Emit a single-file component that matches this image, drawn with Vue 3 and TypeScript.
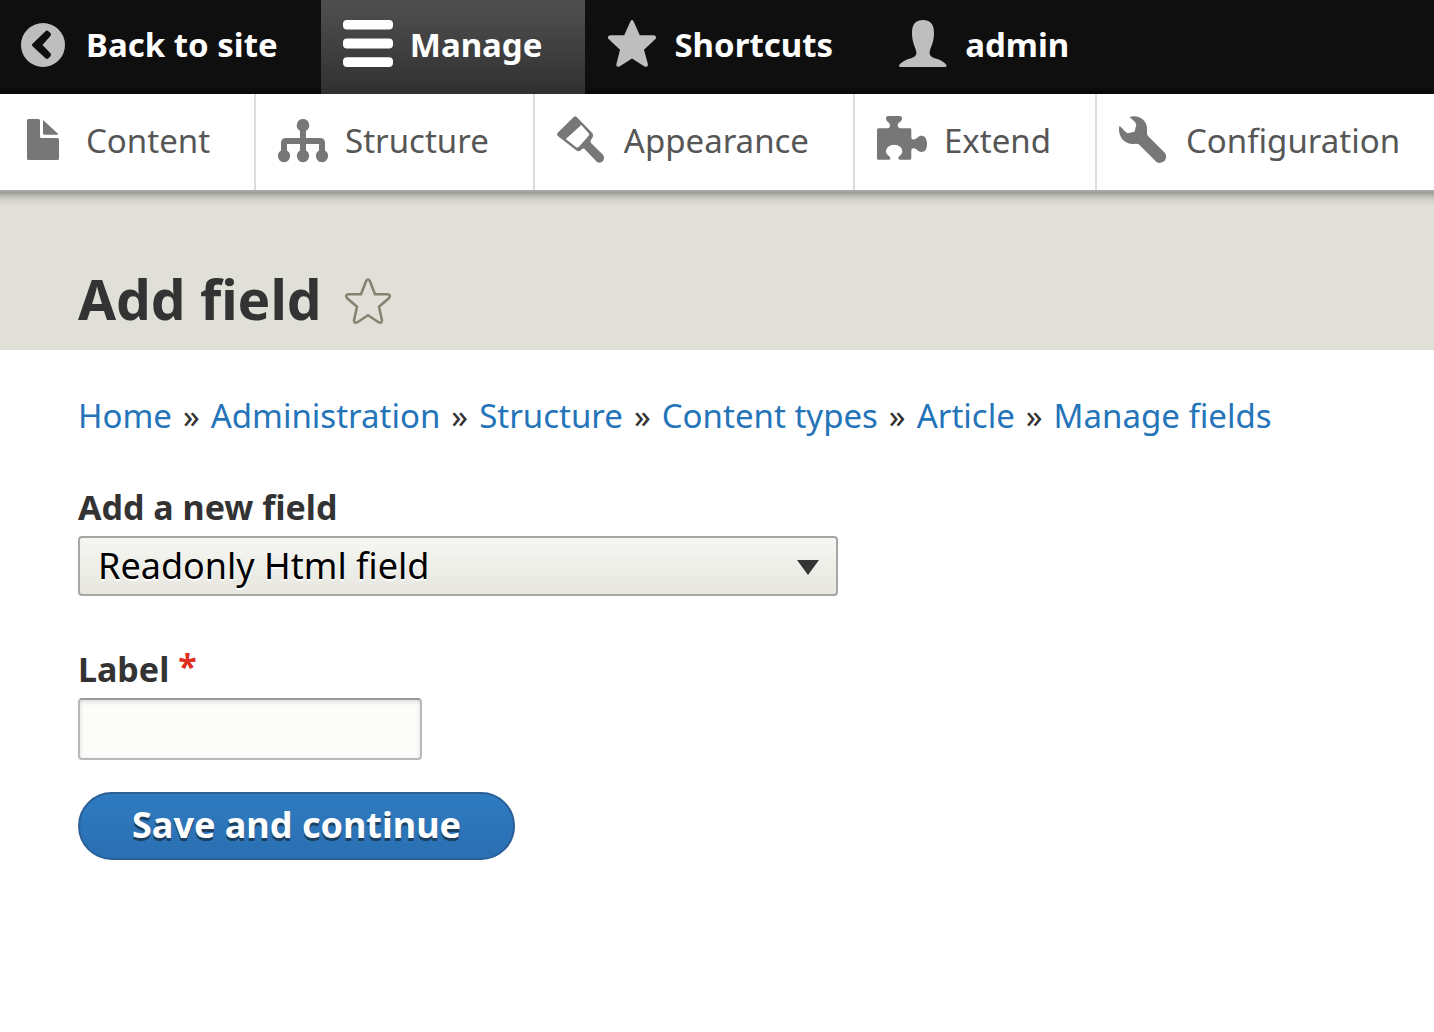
<script setup lang="ts">
import { ref } from 'vue'

interface ToolbarItem {
  id: string
  label: string
  active?: boolean
}

const barItems: ToolbarItem[] = [
  { id: 'back', label: 'Back to site' },
  { id: 'manage', label: 'Manage', active: true },
  { id: 'shortcuts', label: 'Shortcuts' },
  { id: 'user', label: 'admin' },
]

const trayItems: ToolbarItem[] = [
  { id: 'content', label: 'Content' },
  { id: 'structure', label: 'Structure' },
  { id: 'appearance', label: 'Appearance' },
  { id: 'extend', label: 'Extend' },
  { id: 'configuration', label: 'Configuration' },
]

const icons: Record<string, string> = {
  back: 'M21 3a22 22 0 1 0 0 44a22 22 0 1 0 0-44zM23.5 11.2q1.5-1.400 3 0l1.900 1.700q1.400 1.500 0 3L20.500 25l7.900 8.200q1.400 1.500 0 3l-1.900 2q-1.500 1.400-3 0L10.300 26q-1-1 0-2z',
  manage: 'M4 0h42a4 4 0 0 1 4 4v1.500a4 4 0 0 1-4 4H4a4 4 0 0 1-4-4V4a4 4 0 0 1 4-4zM4 18.500h42a4 4 0 0 1 4 4v2a4 4 0 0 1-4 4H4a4 4 0 0 1-4-4v-2a4 4 0 0 1 4-4zM4 37.300h42a4 4 0 0 1 4 4v1.700a4 4 0 0 1-4 4H4a4 4 0 0 1-4-4v-1.700a4 4 0 0 1 4-4z',
  shortcuts: 'M23.500 1.200Q25-1 26.500 1.200L32.800 15.300H46.500Q50 15.800 48.700 18.700L37 29.700L41 44.500Q41 47.800 37.500 46.500L25 38.500L12.500 46.500Q9 47.800 9.300 44.500L13 29.700L1.300 18.700Q0 15.800 3.500 15.300H17.200z',
  user: 'M25 0C33 0 36 5 36 13C36 22 33 26 31.600 32C31 38 38 38 42 40Q48.600 43.500 48.600 46Q48.600 47 47 47H2.600Q1 47 1 46Q1 43.500 8 40C12 38 19 38 18.400 32C17 26 14 22 14 13C14 5 17 0 25 0z',
  content: 'M6.500 3H16.500Q18 3 18 4.500V20.500Q18 22 19.500 22H35.500Q37 22 37 23.500V42.500Q37 44 35.500 44H6.500Q5 44 5 42.500V4.500Q5 3 6.500 3zM21 4L36 17.700Q36.500 18.800 35 18.800H22.500Q21 18.800 21 17.300z',
  structure: 'M25 3a6.300 6.300 0 0 1 3 11.800V22H42Q47 22 47 27V34.600A6.200 6.200 0 1 1 41 34.600V28H28V34.600A6.200 6.200 0 1 1 22 34.600V28H9V34.600A6.200 6.200 0 1 1 3 34.600V27Q3 22 8 22H22V14.800A6.300 6.300 0 0 1 25 3z',
  appearance: 'M17 .700Q18.300-.500 19.700 1L34.500 16.200Q37.200 18.500 35.500 21.500Q32.500 25.500 34 27L45.700 38.500Q48 41 46.300 44.500Q43.500 48 40 46L28.500 34Q26.500 31.300 24.500 33.500Q22 36.500 19.500 34.500L.800 20Q-.800 18.800 .500 17zM8.800 23L19.500 31.500Q21.500 32 23.500 29L31 20.500Q33 18.500 31.500 17L24.300 9z',
  extend: 'M10.500 0H23.200Q26 1 24.700 4C23.500 6.500 20.700 6.500 20.700 9.500Q21 12.300 23.500 12.300H33Q34.300 12.300 34.300 13.600V21.500Q34.500 24 37 23.500C40.500 22.500 41 19.700 44.700 19.700C48 19.700 50 23 50 28S48 36 44.700 36C41 36 40.500 33.300 37 32.300Q34.500 32 34.300 34V42.200Q34.300 43.700 33 43.700H22.500C18.500 41 25.300 40 25.300 35.500Q24.500 28.700 17.200 28.700T9 35.500C9 40 16 41 12.500 43.700H1.500Q0 43.700 0 42.200V13.800Q0 12.300 1.500 12.300H10.500Q13 12.300 13 9.500C13 6.500 10.500 6.500 9.300 4Q8.300 1 10.500 0z',
  configuration: 'M10.500 1C19-2 29 4 28 14Q27.500 18 29 20L45.500 36.500Q48.500 40 46 44.500Q41.500 48.500 37.500 46L20 28.500Q18.500 27.500 15 28C5 28.500-1.500 20 .300 10Q1.500 10 5 14.500L8.500 17.300L15.500 15.800L17.300 8.800L16 6z',
}

const breadcrumb: string[] = ['Home', 'Administration', 'Structure', 'Content types', 'Article', 'Manage fields']

const fieldType = ref('readonly_html')
const label = ref('')
</script>

<template>
  <div class="page">
    <nav class="bar" aria-label="Administration toolbar">
      <a
        v-for="item in barItems"
        :key="item.id"
        href="#"
        class="bar-item"
        :class="{ active: item.active }"
      >
        <svg class="icon" viewBox="0 0 50 50" aria-hidden="true"><path :d="icons[item.id]" fill-rule="evenodd" /></svg>
        <span>{{ item.label }}</span>
      </a>
    </nav>
    <nav class="tray" aria-label="Administration menu">
      <a v-for="item in trayItems" :key="item.id" href="#" class="tray-item">
        <svg class="icon" viewBox="0 0 50 50" aria-hidden="true"><path :d="icons[item.id]" fill-rule="evenodd" /></svg>
        <span>{{ item.label }}</span>
      </a>
    </nav>

    <header class="header">
      <h1>Add field</h1>
      <button type="button" class="star" aria-label="Add to shortcuts">
        <svg viewBox="0 0 46 46" aria-hidden="true">
          <path d="M21.200 2.800Q23 0 24.800 2.800L30 16.300H42.500Q46.500 17 44 20L34 28.700L37 42.500Q36.800 45.800 33.500 44.200L23 37.300L12.500 44.200Q9.200 45.800 9 42.500L12 28.700L2 20Q-.500 17 3.500 16.300H16z" />
        </svg>
      </button>
    </header>

    <main class="content">
      <nav aria-label="Breadcrumb">
        <ol class="breadcrumb">
          <li v-for="crumb in breadcrumb" :key="crumb"><a href="#">{{ crumb }}</a></li>
        </ol>
      </nav>
      <form @submit.prevent>
        <div class="form-item">
          <label for="field-type">Add a new field</label>
          <div class="select-wrap">
            <select id="field-type" v-model="fieldType">
              <option value="readonly_html">Readonly Html field</option>
            </select>
            <svg class="arrow" viewBox="0 0 22 15" aria-hidden="true"><path d="M0 0H22L11 15z" /></svg>
          </div>
        </div>
        <div class="form-item">
          <label for="field-label">Label <span class="required">*</span></label>
          <input id="field-label" v-model="label" type="text">
        </div>
        <button type="submit" class="primary">Save and continue</button>
      </form>
    </main>
  </div>
</template>

<style>
body {
  background: #fff;
}
</style>

<style scoped>
.page {
  font-family: "Noto Sans", "Open Sans", sans-serif;
  font-size: 34px;
  line-height: 40px;
  color: #333;
}

a {
  text-decoration: none;
}

.bar,
.tray,
.breadcrumb {
  font-size: 33px;
}

.bar {
  display: flex;
  height: 94px;
  background: linear-gradient(#0f0f0f 86px, #070707);
}

.bar-item,
.tray-item {
  display: flex;
  align-items: center;
  flex: none;
  box-sizing: border-box;
  gap: 17px;
  white-space: nowrap;
}

.bar-item {
  padding: 0 43px 4px 22px;
  color: #fff;
  font-weight: bold;
}

.bar-item.active {
  background: linear-gradient(#4d4d4d 10%, #303030);
}

.icon {
  flex: none;
  width: 50px;
  height: 50px;
  overflow: visible;
  fill: #bebebe;
}

.active .icon {
  fill: #fff;
}

.tray {
  display: flex;
  height: 96px;
  background: #fff;
  border-bottom: 2px solid #a6a6a6;
  overflow-x: clip;
}

.tray-item {
  padding: 0 44px 2px 22px;
  color: #565656;
  border-right: 2px solid #ddd;
}

.tray-item:last-child {
  padding-right: 0;
  border-right: 0;
}

.tray .icon {
  fill: #777;
}

.bar-item:first-child,
.tray-item:first-child {
  gap: 14px;
}

.header {
  display: flex;
  align-items: center;
  gap: 23px;
  padding: 77px 78px 21px;
  background: linear-gradient(#9a9a95, #c2c2bb 5px, #d6d6cf 9px, #e0e0d8 15px);
}

h1 {
  margin: 0;
  font-size: 55px;
  line-height: 60px;
}

.star {
  width: 46px;
  height: 46px;
  margin-top: 4px;
  padding: 0;
  background: none;
  border: 0;
}

.star svg {
  display: block;
  fill: none;
  stroke: #84826e;
  stroke-width: 2.5;
}

.content {
  padding: 46px 78px;
}

.breadcrumb {
  display: flex;
  flex-wrap: wrap;
  margin: 0 0 51px;
  padding: 0;
  list-style: none;
}

.breadcrumb a {
  color: #2474b9;
}

.breadcrumb li + li::before {
  content: "»";
  padding: 0 11px;
}

.form-item {
  margin-bottom: 53px;
}

.form-item + .form-item {
  margin-bottom: 32px;
}

label {
  display: block;
  margin-bottom: 9px;
  font-weight: bold;
}

.required {
  line-height: 1;
  vertical-align: 3px;
  color: #e02d1f;
}

.select-wrap {
  position: relative;
  width: 760px;
  max-width: 100%;
}

select {
  display: block;
  box-sizing: border-box;
  width: 100%;
  height: 60px;
  padding: 0 60px 0 18px;
  appearance: none;
  font: inherit;
  font-size: 36px;
  line-height: 54px;
  color: #000;
  text-shadow: 0 2px #fff;
  background: linear-gradient(#f6f6f3, #e7e7df);
  border: 2px solid #a6a6a6;
  border-radius: 4px;
}

.arrow {
  position: absolute;
  top: 24px;
  right: 19px;
  width: 22px;
  height: 15px;
  fill: #333;
  pointer-events: none;
}

input {
  display: block;
  box-sizing: border-box;
  width: 344px;
  max-width: 100%;
  height: 62px;
  padding: 0 16px;
  font: inherit;
  background: #fcfcfa;
  border: 2px solid #b8b8b8;
  border-top-color: #999;
  border-radius: 4px;
  box-shadow: inset 0 2px 4px rgba(0, 0, 0, 0.125);
}

.primary {
  height: 68px;
  padding: 0 52px 2px;
  font: inherit;
  font-size: 36px;
  font-weight: bold;
  color: #fff;
  text-shadow: 0 3px #1a3f60;
  background: linear-gradient(#2f7bc0, #2a6fb2);
  border: 2px solid #2a5f98;
  border-radius: 34px;
}
</style>
